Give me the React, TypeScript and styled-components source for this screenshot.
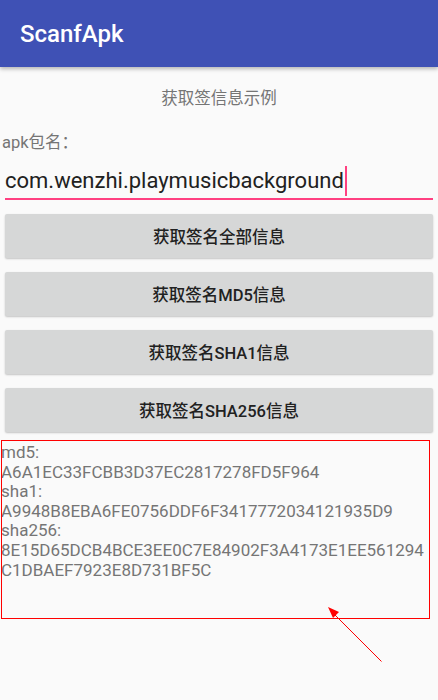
import React from 'react';
import styled, { createGlobalStyle } from 'styled-components';

const GlobalStyle = createGlobalStyle`
  html, body {
    margin: 0;
    padding: 0;
    background: #fafafa;
  }
  body {
    font-family: Roboto, "Noto Sans CJK SC", sans-serif;
  }
`;

const Screen = styled.div`
  position: relative;
  width: 438px;
  height: 700px;
  overflow: hidden;
  background: #fafafa;
  display: flex;
  flex-direction: column;
`;

const AppBar = styled.header`
  height: 67px;
  flex-shrink: 0;
  background: #3f51b5;
  display: flex;
  align-items: center;
  padding: 0 20px;
  box-shadow: 0 2px 4px rgba(0, 0, 0, 0.28);
  position: relative;
  z-index: 1;
`;

const Title = styled.h1`
  margin: 0;
  color: #ffffff;
  font-size: 24px;
  font-weight: 500;
`;

const Body = styled.main`
  display: flex;
  flex-direction: column;
`;

const Subtitle = styled.div`
  margin-top: 21px;
  text-align: center;
  font-size: 16.5px;
  line-height: 22px;
  color: #757575;
`;

const Label = styled.div`
  margin-top: 22px;
  padding-left: 2px;
  font-size: 16.5px;
  line-height: 22px;
  color: #757575;
`;

const InputRow = styled.div`
  margin: 11px 5px 0;
  height: 35px;
  display: flex;
  align-items: center;
  border-bottom: 2px solid #ff4081;
  box-sizing: border-box;
  padding-bottom: 1px;
`;

const InputText = styled.span`
  font-size: 22px;
  color: #212121;
  line-height: 30px;
`;

const Caret = styled.span`
  display: inline-block;
  width: 2px;
  height: 30px;
  margin-left: 1px;
  background: #ff4081;
`;

const ButtonList = styled.div`
  margin: 14px 5px 0;
  display: flex;
  flex-direction: column;
  gap: 14px;
`;

const ActionButton = styled.button`
  height: 44px;
  border: none;
  border-radius: 2px;
  background: #d6d7d7;
  box-shadow: 0 1px 2px rgba(0, 0, 0, 0.22);
  font-family: Roboto, "Noto Sans CJK SC", sans-serif;
  font-size: 16.5px;
  font-weight: 500;
  color: #212121;
  cursor: pointer;
`;

const Result = styled.div`
  margin-top: 11px;
  padding-left: 1px;
  font-size: 17px;
  line-height: 19.6px;
  color: #757575;
`;

const ResultLine = styled.div`
  white-space: nowrap;
`;

const Highlight = styled.div`
  position: absolute;
  left: 1px;
  top: 440px;
  width: 429px;
  height: 179px;
  border: 1px solid #ff0000;
  box-sizing: border-box;
  pointer-events: none;
`;

const Pointer = styled.svg`
  position: absolute;
  left: 320px;
  top: 600px;
  pointer-events: none;
`;

const buttons = ['获取签名全部信息', '获取签名MD5信息', '获取签名SHA1信息', '获取签名SHA256信息'];

const resultLines = [
  'md5:',
  'A6A1EC33FCBB3D37EC2817278FD5F964',
  'sha1:',
  'A9948B8EBA6FE0756DDF6F3417772034121935D9',
  'sha256:',
  '8E15D65DCB4BCE3EE0C7E84902F3A4173E1EE561294',
  'C1DBAEF7923E8D731BF5C',
];

export default function App() {
  return (
    <>
      <GlobalStyle />
      <Screen>
        <AppBar>
          <Title>ScanfApk</Title>
        </AppBar>
        <Body>
          <Subtitle>获取签信息示例</Subtitle>
          <Label>apk包名：</Label>
          <InputRow>
            <InputText>com.wenzhi.playmusicbackground</InputText>
            <Caret />
          </InputRow>
          <ButtonList>
            {buttons.map((b) => (
              <ActionButton key={b}>{b}</ActionButton>
            ))}
          </ButtonList>
          <Result>
            {resultLines.map((l, i) => (
              <ResultLine key={i}>{l}</ResultLine>
            ))}
          </Result>
        </Body>
        <Highlight />
        <Pointer width="70" height="70" viewBox="0 0 70 70">
          <line x1="61.5" y1="61.5" x2="14" y2="14" stroke="#ff0000" strokeWidth="1" />
          <polygon points="8,7 19,12 13,18" fill="#ff0000" />
        </Pointer>
      </Screen>
    </>
  );
}
